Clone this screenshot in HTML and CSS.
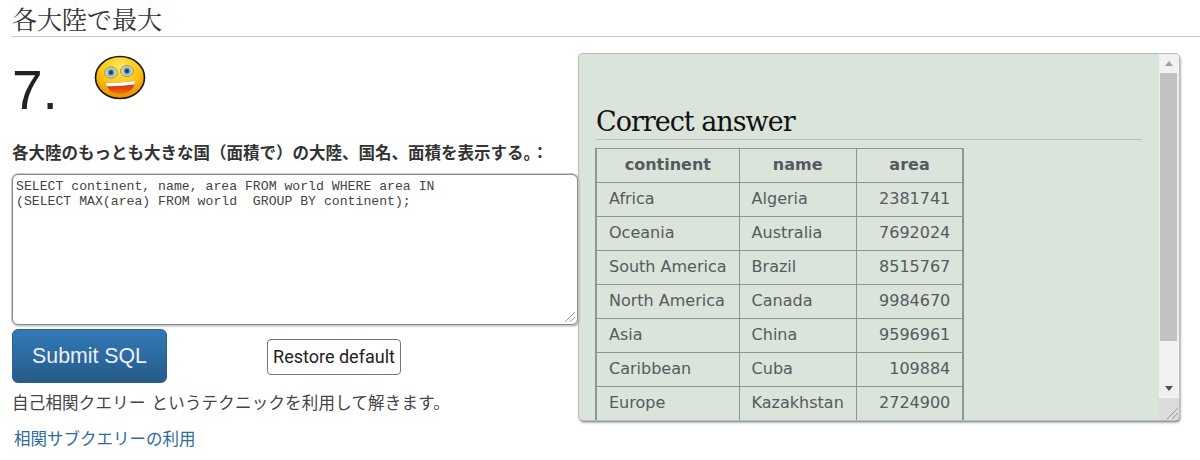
FILE: index.html
```html
<!DOCTYPE html>
<html lang="ja">
<head>
<meta charset="utf-8">
<title>各大陸で最大</title>
<link rel="stylesheet" href="styles.css">
</head>
<body>
<h2 class="title">各大陸で最大</h2>
<main class="layout">
  <section class="question">
    <div class="qhead">
      <span class="qnum">7.</span>
      <svg class="smiley" width="52" height="46" viewBox="0 0 52 46">
        <defs>
          <radialGradient id="face" cx="50%" cy="25%" r="75%">
            <stop offset="0" stop-color="#ffe85e"/>
            <stop offset="0.55" stop-color="#fdc414"/>
            <stop offset="1" stop-color="#ea8a04"/>
          </radialGradient>
          <linearGradient id="mouth" x1="0" y1="0" x2="0" y2="1">
            <stop offset="0" stop-color="#c8300a"/>
            <stop offset="0.6" stop-color="#e2480c"/>
            <stop offset="1" stop-color="#f0860f"/>
          </linearGradient>
        </defs>
        <ellipse cx="26" cy="22.500" rx="24.500" ry="21" fill="url(#face)" stroke="#1c1408" stroke-width="1.600"/>
        <ellipse cx="17" cy="17.500" rx="6.300" ry="5.500" fill="#d4dcd4" stroke="#a88a30" stroke-width="1"/>
        <ellipse cx="33" cy="16" rx="6.300" ry="5.500" fill="#d4dcd4" stroke="#a88a30" stroke-width="1"/>
        <circle cx="17" cy="17.500" r="3.700" fill="#5ea8c0"/>
        <circle cx="33" cy="16" r="3.700" fill="#5ea8c0"/>
        <circle cx="17" cy="17.500" r="2" fill="#2a3a48"/>
        <circle cx="33" cy="16" r="2" fill="#2a3a48"/>
        <path d="M12 28 Q27 28 41 26 C41 34 34 39.500 26 39.500 C18 39.500 13 34 12 28Z" fill="url(#mouth)"/>
        <path d="M12 28 Q27 28 41 26 L40.400 29.500 Q27 31.500 12.900 31.300Z" fill="#fff"/>
      </svg>
    </div>
    <p class="prompt">各大陸のもっとも大きな国（面積で）の大陸、国名、面積を表示する。：</p>
    <div class="editor">
      <pre class="code">SELECT continent, name, area FROM world WHERE area IN
(SELECT MAX(area) FROM world  GROUP BY continent);</pre>
      <svg class="grip" width="12" height="12" viewBox="0 0 12 12"><path d="M1 11 11 1M6 11 11 6" stroke="#999" fill="none"/></svg>
    </div>
    <div class="actions">
      <button class="submit">Submit SQL</button>
      <button class="restore">Restore default</button>
    </div>
    <p class="hint">自己相関クエリー というテクニックを利用して解きます。</p>
    <a class="link" href="#">相関サブクエリーの利用</a>
  </section>
  <aside class="answer">
    <div class="scrollview">
      <h2 class="answer-title">Correct answer</h2>
      <table class="result">
        <thead>
          <tr><th>continent</th><th>name</th><th>area</th></tr>
        </thead>
        <tbody>
          <tr><td>Africa</td><td>Algeria</td><td class="num">2381741</td></tr>
          <tr><td>Oceania</td><td>Australia</td><td class="num">7692024</td></tr>
          <tr><td>South America</td><td>Brazil</td><td class="num">8515767</td></tr>
          <tr><td>North America</td><td>Canada</td><td class="num">9984670</td></tr>
          <tr><td>Asia</td><td>China</td><td class="num">9596961</td></tr>
          <tr><td>Caribbean</td><td>Cuba</td><td class="num">109884</td></tr>
          <tr class="clipped"><td>Europe</td><td>Kazakhstan</td><td class="num">2724900</td></tr>
        </tbody>
      </table>
    </div>
    <div class="scrollbar">
      <div class="arrow"><span class="tri-up"></span></div>
      <div class="track"><div class="thumb"></div></div>
      <div class="arrow"><span class="tri-down"></span></div>
      <div class="corner"><svg width="14" height="14" viewBox="0 0 14 14"><path d="M2 13 13 2M7 13 13 7" stroke="#999" fill="none"/></svg></div>
    </div>
  </aside>
</main>
</body>
</html>
```
FILE: styles.css
```css
html, body { margin: 0; padding: 0; background: #fff; }
body {
  width: 1200px;
  height: 460px;
  overflow: hidden;
  padding: 0 0 0 12px;
  box-sizing: border-box;
  font-family: "DejaVu Sans", "Noto Sans CJK JP", sans-serif;
  color: #333;
}
.title {
  margin: 0;
  height: 37px;
  box-sizing: border-box;
  padding-top: 3px;
  font: 400 25px/30px "Noto Serif CJK JP", "Liberation Serif", "Noto Sans CJK JP", serif;
  color: #333;
  border-bottom: 1px solid #c4c8cc;
}
.layout {
  display: flex;
  align-items: flex-start;
  margin-top: 17px;
}
.question { width: 567px; flex: none; }
.qhead { display: flex; align-items: flex-start; height: 87px; }
.qnum {
  font: 400 55px/72px "Liberation Sans", sans-serif;
  color: #222;
  width: 82px;
}
.smiley { margin-top: 1px; display: block; }
.prompt {
  margin: 0 0 11px;
  font: 700 16.500px/22px "Noto Sans CJK JP", sans-serif;
  color: #333;
  white-space: nowrap;
}
.editor {
  position: relative;
  width: 566px;
  height: 151px;
  box-sizing: border-box;
  border: 1px solid #888;
  border-radius: 6px;
  box-shadow: 0 0 0 1px #ccc, 1px 1px 2px #777;
  background: #fff;
  padding: 4px 3px;
}
.code {
  margin: 0;
  font: 400 13.170px/15px "Liberation Mono", monospace;
  color: #444;
}
.grip { position: absolute; right: 1px; bottom: 1px; }
.actions {
  display: flex;
  align-items: flex-start;
  margin-top: 4px;
  height: 54px;
}
.submit {
  width: 155px;
  height: 54px;
  border: 1px solid #2a5f8f;
  border-radius: 6px;
  background: linear-gradient(#337ab7, #265a88);
  color: #eef;
  font: 400 21.300px "Liberation Sans", sans-serif;
}
.restore {
  margin: 10px 0 0 100px;
  width: 134px;
  height: 36px;
  padding: 0 0 2px;
  border: 1px solid #777;
  border-radius: 4px;
  background: #fff;
  color: #222;
  font: 400 18px "Roboto", "Liberation Sans", sans-serif;
}
.hint {
  margin: 7px 0 0;
  font: 400 16.500px/24px "Noto Sans CJK JP", sans-serif;
  letter-spacing: 0.2px;
  word-spacing: 2px;
  color: #444;
}
.link {
  display: block;
  margin-top: 12px;
  margin-left: 2px;
  font: 400 16.500px/24px "Noto Sans CJK JP", sans-serif;
  color: #2f6b9c;
  text-decoration: none;
}
.answer {
  display: flex;
  width: 600px;
  height: 366px;
  flex: none;
  box-sizing: border-box;
  border-radius: 4px;
  background: #dae4da;
  box-shadow: 0 0 0 1px #bbb, 1px 2px 3px #666;
  overflow: hidden;
}
.scrollview {
  flex: 1;
  min-width: 0;
  padding: 0 17px 0 17px;
  overflow: hidden;
}
.answer-title {
  margin: 52px 0 8px;
  height: 34px;
  box-sizing: border-box;
  font: 400 27px/32px "DejaVu Serif", "Liberation Serif", serif;
  letter-spacing: -1px;
  color: #111;
  border-bottom: 1px solid #b8c0b8;
}
.result {
  margin: 0 0 0 -1px;
  border-collapse: collapse;
  font-size: 16px;
  color: #555a60;
  border: solid #909590;
  border-width: 1px 2px 0;
}
.result th, .result td {
  border: 1px solid #909590;
  height: 34px;
  box-sizing: border-box;
  padding: 0 12px 3px;
  white-space: nowrap;
}
.result .clipped td { border-bottom: 0; }
.result th { font-weight: 700; text-align: center; }
.result th:nth-child(1), .result td:nth-child(1) { width: 143px; }
.result th:nth-child(2), .result td:nth-child(2) { width: 116px; }
.result th:nth-child(3), .result td:nth-child(3) { width: 107px; }
.result .num { text-align: right; }
.scrollbar {
  width: 20px;
  flex: none;
  display: flex;
  flex-direction: column;
  background: #f1f1f1;
}
.arrow { height: 19px; flex: none; display: flex; align-items: center; justify-content: center; }
.tri-up { border: 4px solid transparent; border-top: 0; border-bottom: 5px solid #a0a0a0; }
.tri-down { border: 4px solid transparent; border-bottom: 0; border-top: 5px solid #505050; }
.track { flex: 1; padding: 0 2px 0 1px; }
.thumb { height: 268px; background: #c1c1c1; }
.corner { height: 22px; flex: none; background: #dcdcdc; display: flex; justify-content: flex-end; align-items: flex-end; }
.corner svg { display: block; }
```
